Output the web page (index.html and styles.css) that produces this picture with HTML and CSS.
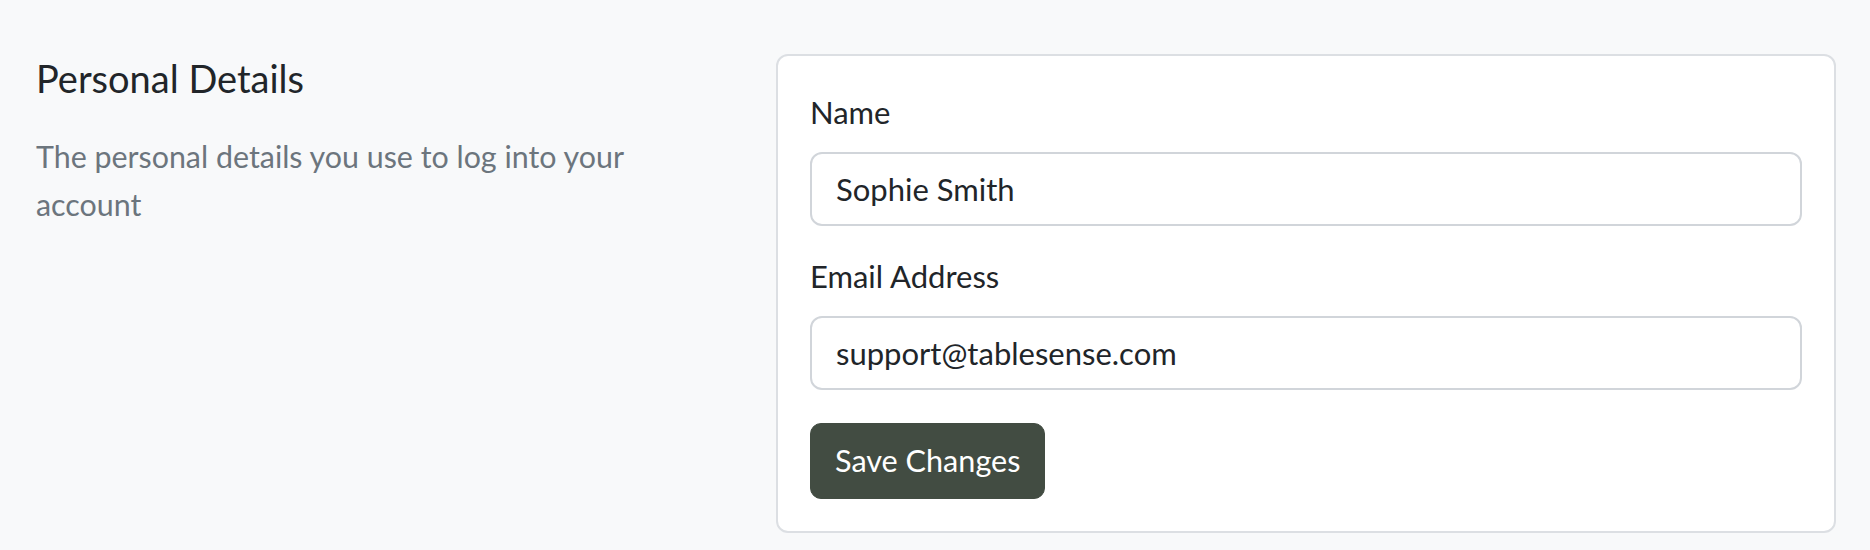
FILE: index.html
```html
<!DOCTYPE html>
<html lang="en">
<head>
<meta charset="utf-8">
<title>Personal Details</title>
<link rel="stylesheet" href="styles.css">
</head>
<body>
<main class="page">
  <section class="settings-row">
    <div class="intro">
      <h2 class="intro-title">Personal Details</h2>
      <p class="intro-text">The personal details you use to log into your account</p>
    </div>
    <form class="card">
      <div class="field">
        <label class="field-label" for="name">Name</label>
        <input class="field-input" id="name" type="text" value="Sophie Smith">
      </div>
      <div class="field">
        <label class="field-label" for="email">Email Address</label>
        <input class="field-input" id="email" type="email" value="support@tablesense.com">
      </div>
      <div class="actions">
        <button class="btn-save" type="button">Save Changes</button>
      </div>
    </form>
  </section>
</main>
</body>
</html>
```

FILE: styles.css
```css
* { box-sizing: border-box; }

html, body {
  margin: 0;
  padding: 0;
  background: #f8f9fa;
}

body {
  font-family: "Lato", "Liberation Sans", sans-serif;
  color: #212529;
  height: 550px;
  overflow: hidden;
}

.page {
  padding: 54px 34px 0 36px;
}

.settings-row {
  display: grid;
  grid-template-columns: 708px 1fr;
  column-gap: 32px;
  align-items: start;
}

.intro-title {
  margin: 0;
  font-size: 38px;
  font-weight: 400;
  line-height: 48px;
  color: #212529;
}

.intro-text {
  margin: 30px 0 0;
  max-width: 640px;
  font-size: 30.4px;
  line-height: 48px;
  color: #6c757d;
}

.card {
  margin: 0;
  background: #fff;
  border: 2px solid #dcdfe3;
  border-radius: 12px;
  padding: 32px 32px 32px;
}

.field {
  display: flex;
  flex-direction: column;
  margin-bottom: 26px;
}

.field-label {
  font-size: 31px;
  line-height: 48px;
  margin-bottom: 16px;
  color: #212529;
}

.field-input {
  display: block;
  width: 100%;
  font-family: inherit;
  font-size: 31px;
  line-height: 48px;
  height: 74px;
  padding: 11px 24px;
  color: #212529;
  background: #fff;
  border: 2px solid #d1d5da;
  border-radius: 12px;
  outline: none;
}

.actions {
  padding-top: 7px;
}

.btn-save {
  font-family: inherit;
  font-size: 30.6px;
  line-height: 48px;
  padding: 13px 24px;
  color: #fff;
  background: #424c42;
  border: 1px solid #424c42;
  border-radius: 11px;
  cursor: pointer;
}
```
